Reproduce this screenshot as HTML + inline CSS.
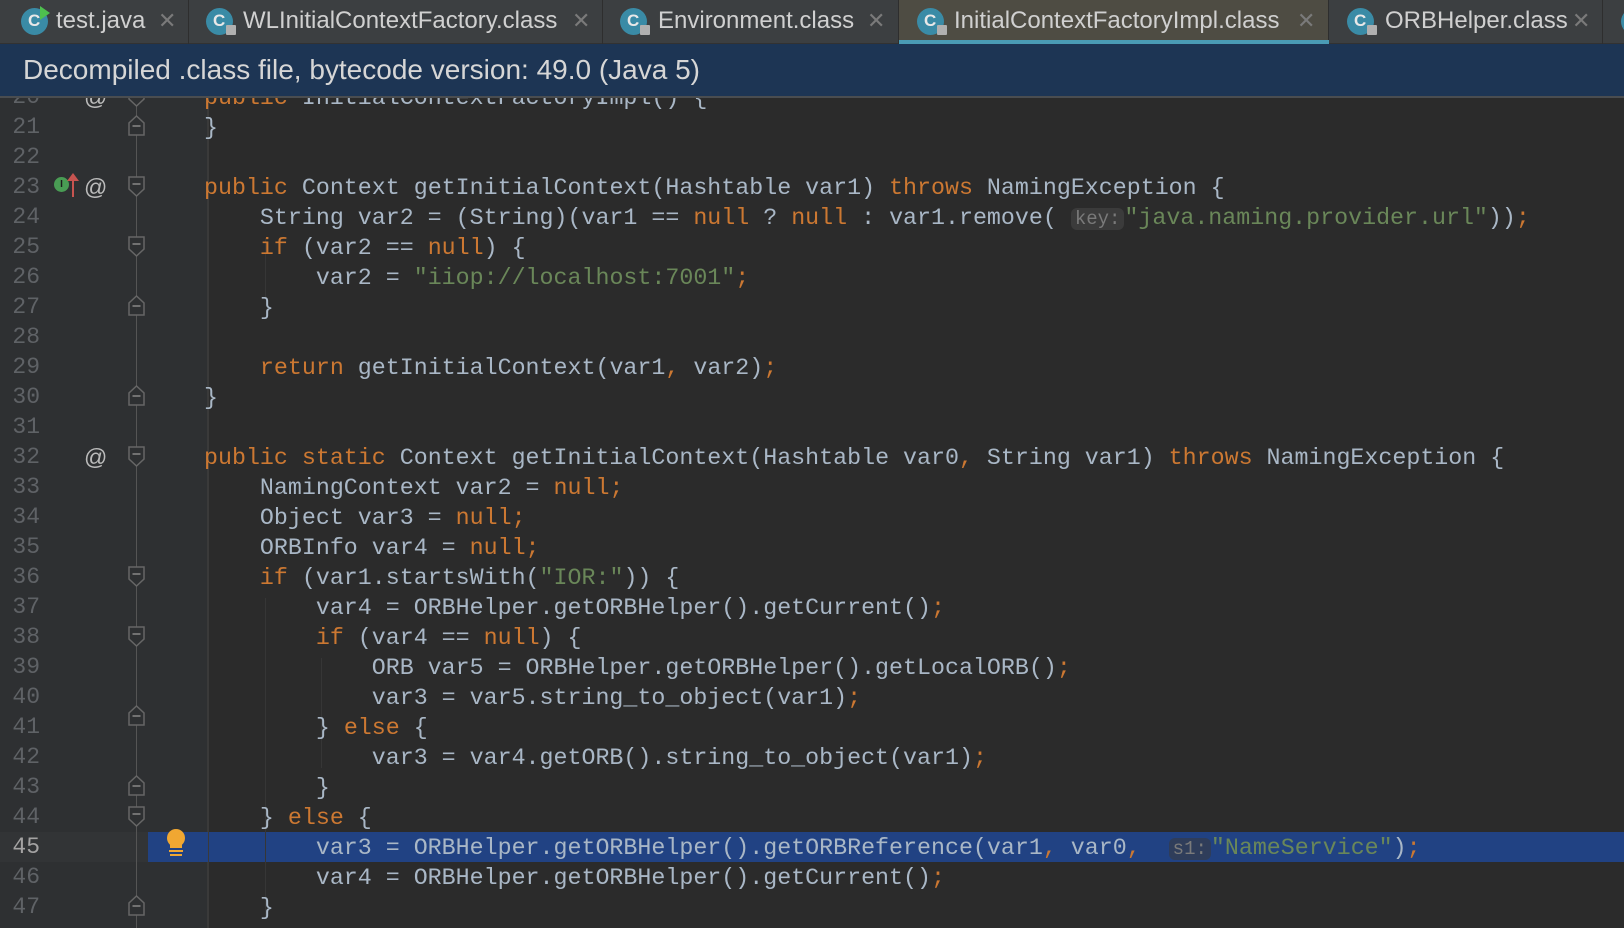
<!DOCTYPE html>
<html><head><meta charset="utf-8"><style>
*{margin:0;padding:0;box-sizing:border-box}
body{width:1624px;height:928px;overflow:hidden;background:#2b2b2b;position:relative;font-family:"Liberation Sans",sans-serif}
#tabs{position:absolute;left:0;top:0;width:1624px;height:44px;background:#3c3f41;border-bottom:1px solid #323232}
.tab{position:absolute;top:0;height:44px;border-right:1px solid #2e2e2e;color:#d0d0d0;font-size:24px}
.tab .t{position:absolute;top:7px}
.tab .x{position:absolute;top:8px;color:#7a7a7a;font-size:22px}
.ic{position:absolute;top:8px;width:27px;height:27px;border-radius:50%;background:#3a8ba6}
.ic:after{content:"C";position:absolute;left:7px;top:3px;font-size:17px;color:#e8e8e8;font-weight:bold}
.lk{position:absolute;top:25px;width:10px;height:10px;background:#b0b0b0;border-radius:1px}
#banner{position:absolute;left:0;top:44px;width:1624px;height:54px;background:#1d3554;border-bottom:2px solid #4a4d50;color:#d6d6d6;font-size:28px;z-index:5}
#banner span{position:absolute;left:23px;top:10px}
#gutter{position:absolute;left:0;top:0;width:208px;height:928px;background:#2e3032;border-right:1px solid #3a3a3a}
.ln{position:absolute;left:0;width:40px;text-align:right;color:#5f6266;font-family:"Liberation Mono",monospace;font-size:23px;line-height:30px}
.code{position:absolute;left:204px;white-space:pre;font-family:"Liberation Mono",monospace;font-size:23.3px;line-height:30px;color:#a9b7c6;margin-top:1px}
.k{color:#cc7832}.s{color:#6a8759}
.h{background:#3b3b3b;color:#7a7a7a;border-radius:6px;font-size:19px;padding:0 4px}
.hl .h{background:#2f3d5a}
.g{position:absolute;width:1px;background:#363636}
</style></head><body>
<div id="gutter"></div>
<div style="position:absolute;left:148px;top:832px;width:1476px;height:30px;background:#214283"></div>
<div style="position:absolute;left:0;top:832px;width:148px;height:30px;background:#323436"></div>
<div style="position:absolute;left:136px;top:98px;width:1px;height:830px;background:#555"></div>
<div class="g" style="left:208px;top:98px;height:830px;background:#3a3a3a"></div>
<div class="g" style="left:265px;top:238px;height:60px"></div>
<div class="g" style="left:265px;top:598px;height:320px"></div>
<div class="g" style="left:321px;top:658px;height:110px"></div>
<div id="tabs">
<div class="tab" style="left:0;width:189px"><div class="ic" style="left:21px"></div><div style="position:absolute;left:40px;top:6px;width:0;height:0;border-top:7px solid transparent;border-bottom:7px solid transparent;border-left:10px solid #4ec04e"></div><span class="t" style="left:56px">test.java</span><span class="x" style="left:158px">✕</span></div>
<div class="tab" style="left:189px;width:414px"><div class="ic" style="left:17px"></div><div class="lk" style="left:37px"></div><span class="t" style="left:54px">WLInitialContextFactory.class</span><span class="x" style="left:383px">✕</span></div>
<div class="tab" style="left:603px;width:296px"><div class="ic" style="left:17px"></div><div class="lk" style="left:37px"></div><span class="t" style="left:55px">Environment.class</span><span class="x" style="left:264px">✕</span></div>
<div class="tab" style="left:899px;width:430px;background:#4e4c43"><div class="ic" style="left:18px"></div><div class="lk" style="left:38px"></div><span class="t" style="left:55px">InitialContextFactoryImpl.class</span><span class="x" style="left:398px">✕</span><div style="position:absolute;left:0;bottom:0;width:430px;height:4px;background:#4a9bb5"></div></div>
<div class="tab" style="left:1329px;width:274px"><div class="ic" style="left:18px"></div><div class="lk" style="left:38px"></div><span class="t" style="left:56px">ORBHelper.class</span><span class="x" style="left:243px">✕</span></div>
<div class="tab" style="left:1603px;width:40px"><div class="ic" style="left:18px"></div></div>
</div>
<div id="banner"><span>Decompiled .class file, bytecode version: 49.0 (Java 5)</span></div>

<div class="ln" style="top:82px">20</div>
<div class="ln" style="top:112px">21</div><div class="ln" style="top:142px">22</div><div class="ln" style="top:172px">23</div><div class="ln" style="top:202px">24</div><div class="ln" style="top:232px">25</div><div class="ln" style="top:262px">26</div><div class="ln" style="top:292px">27</div><div class="ln" style="top:322px">28</div><div class="ln" style="top:352px">29</div><div class="ln" style="top:382px">30</div><div class="ln" style="top:412px">31</div><div class="ln" style="top:442px">32</div><div class="ln" style="top:472px">33</div><div class="ln" style="top:502px">34</div><div class="ln" style="top:532px">35</div><div class="ln" style="top:562px">36</div><div class="ln" style="top:592px">37</div><div class="ln" style="top:622px">38</div><div class="ln" style="top:652px">39</div><div class="ln" style="top:682px">40</div><div class="ln" style="top:712px">41</div><div class="ln" style="top:742px">42</div><div class="ln" style="top:772px">43</div><div class="ln" style="top:802px">44</div><div class="ln" style="top:832px;color:#a4a3a3">45</div><div class="ln" style="top:862px">46</div><div class="ln" style="top:892px">47</div>

<div style="position:absolute;left:54px;top:177px;width:15px;height:15px;border-radius:50%;background:#499c54;color:#1d1d1d;font-size:10px;font-weight:bold;text-align:center;line-height:15px">I</div>
<div style="position:absolute;left:72px;top:176px;width:2px;height:21px;background:#c75450"></div>
<div style="position:absolute;left:67px;top:173px;width:0;height:0;border-left:6px solid transparent;border-right:6px solid transparent;border-bottom:8px solid #c75450"></div>
<div style="position:absolute;left:84px;top:172px;color:#bbb;font-size:23px;line-height:30px">@</div>
<div style="position:absolute;left:84px;top:442px;color:#bbb;font-size:23px;line-height:30px">@</div>
<div style="position:absolute;left:84px;top:82px;color:#bbb;font-size:23px;line-height:30px">@</div>

<svg style="position:absolute;left:0;top:0" width="208" height="928">
<g fill="#2e3032" stroke="#666" stroke-width="1.5">
<path d="M129 177h15v12l-7.5 7l-7.5-7z"/><path d="M129 237h15v12l-7.5 7l-7.5-7z"/><path d="M129 447h15v12l-7.5 7l-7.5-7z"/><path d="M129 567h15v12l-7.5 7l-7.5-7z"/><path d="M129 627h15v12l-7.5 7l-7.5-7z"/><path d="M129 807h15v12l-7.5 7l-7.5-7z"/><path d="M129 87h15v12l-7.5 7l-7.5-7z"/>
<path d="M129 135h15v-12l-7.5-7l-7.5 7z"/><path d="M129 315h15v-12l-7.5-7l-7.5 7z"/><path d="M129 405h15v-12l-7.5-7l-7.5 7z"/><path d="M129 725h15v-12l-7.5-7l-7.5 7z"/><path d="M129 795h15v-12l-7.5-7l-7.5 7z"/><path d="M129 915h15v-12l-7.5-7l-7.5 7z"/>
</g>
<g stroke="#888" stroke-width="1.5">
<path d="M132.5 184h8M132.5 244h8M132.5 454h8M132.5 574h8M132.5 634h8M132.5 814h8M132.5 126h8M132.5 306h8M132.5 396h8M132.5 716h8M132.5 786h8M132.5 906h8"/>
</g>
<circle cx="176" cy="838" r="9" fill="#f0a732"/>
<rect x="170" y="844" width="12" height="4" fill="#f0a732"/>
<path d="M169 851h14M170 855h12" stroke="#f0a732" stroke-width="2"/>
</svg>

<div class="code" style="top:82px"><span class="k">public</span> InitialContextFactoryImpl() {</div>
<div class="code" style="top:112px">}</div>
<div class="code" style="top:172px"><span class="k">public</span> Context getInitialContext(Hashtable var1) <span class="k">throws</span> NamingException {</div>
<div class="code" style="top:202px">    String var2 = (String)(var1 == <span class="k">null</span> ? <span class="k">null</span> : var1.remove( <span class="h">key:</span><span class="s">"java.naming.provider.url"</span>))<span class="k">;</span></div>
<div class="code" style="top:232px">    <span class="k">if</span> (var2 == <span class="k">null</span>) {</div>
<div class="code" style="top:262px">        var2 = <span class="s">"iiop://localhost:7001"</span><span class="k">;</span></div>
<div class="code" style="top:292px">    }</div>
<div class="code" style="top:352px">    <span class="k">return</span> getInitialContext(var1<span class="k">,</span> var2)<span class="k">;</span></div>
<div class="code" style="top:382px">}</div>
<div class="code" style="top:442px"><span class="k">public static</span> Context getInitialContext(Hashtable var0<span class="k">,</span> String var1) <span class="k">throws</span> NamingException {</div>
<div class="code" style="top:472px">    NamingContext var2 = <span class="k">null;</span></div>
<div class="code" style="top:502px">    Object var3 = <span class="k">null;</span></div>
<div class="code" style="top:532px">    ORBInfo var4 = <span class="k">null;</span></div>
<div class="code" style="top:562px">    <span class="k">if</span> (var1.startsWith(<span class="s">"IOR:"</span>)) {</div>
<div class="code" style="top:592px">        var4 = ORBHelper.getORBHelper().getCurrent()<span class="k">;</span></div>
<div class="code" style="top:622px">        <span class="k">if</span> (var4 == <span class="k">null</span>) {</div>
<div class="code" style="top:652px">            ORB var5 = ORBHelper.getORBHelper().getLocalORB()<span class="k">;</span></div>
<div class="code" style="top:682px">            var3 = var5.string_to_object(var1)<span class="k">;</span></div>
<div class="code" style="top:712px">        } <span class="k">else</span> {</div>
<div class="code" style="top:742px">            var3 = var4.getORB().string_to_object(var1)<span class="k">;</span></div>
<div class="code" style="top:772px">        }</div>
<div class="code" style="top:802px">    } <span class="k">else</span> {</div>
<div class="code hl" style="top:832px">        var3 = ORBHelper.getORBHelper().getORBReference(var1<span class="k">,</span> var0<span class="k">,</span>  <span class="h">s1:</span><span class="s">"NameService"</span>)<span class="k">;</span></div>
<div class="code" style="top:862px">        var4 = ORBHelper.getORBHelper().getCurrent()<span class="k">;</span></div>
<div class="code" style="top:892px">    }</div>
</body></html>
